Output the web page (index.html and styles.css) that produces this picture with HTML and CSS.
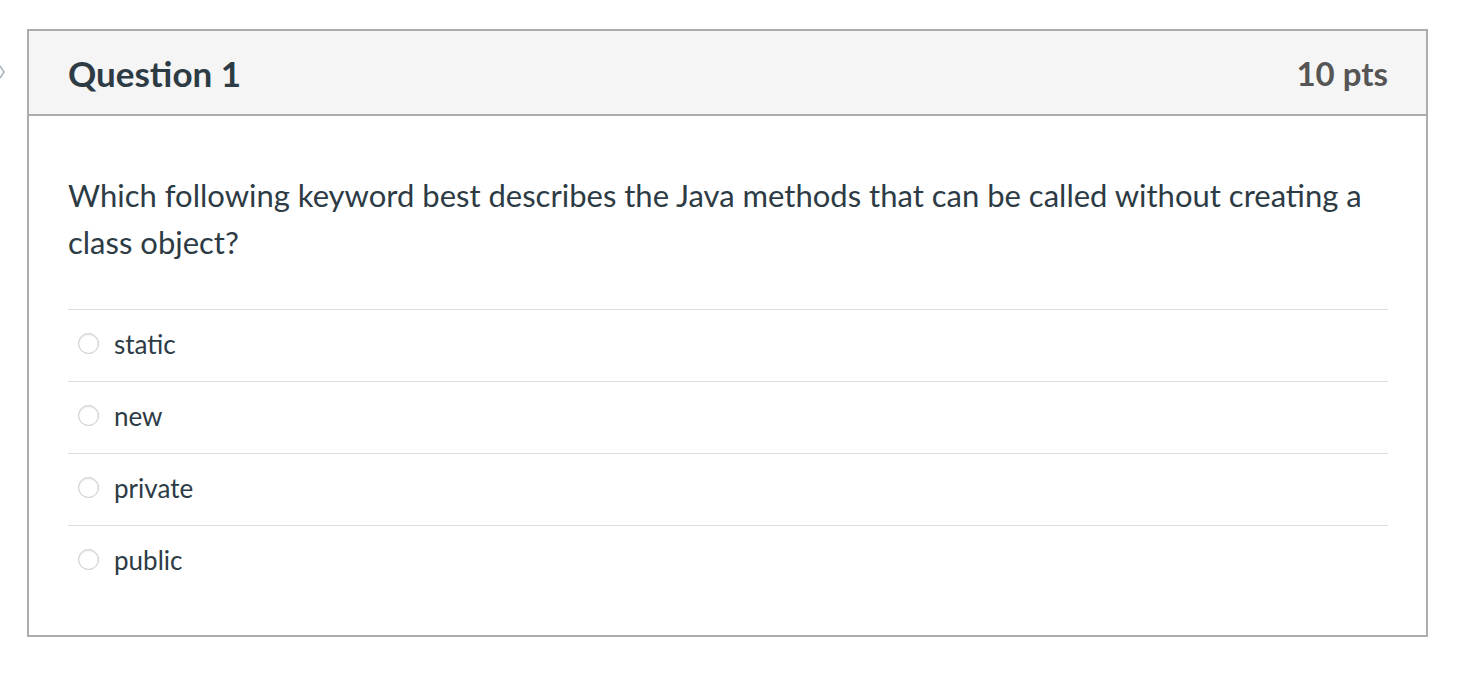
FILE: index.html
```html
<!DOCTYPE html>
<html>
<head>
<meta charset="utf-8">
<link rel="stylesheet" href="styles.css">
</head>
<body>
<div class="page">
  <div class="chev">
    <svg width="10" height="16" viewBox="0 0 10 16"><path d="M3 2 L7 8 L3 14" fill="none" stroke="#a3afbb" stroke-width="1.5"/></svg>
  </div>
  <div class="card">
    <div class="head">
      <h2 class="title">Question 1</h2>
      <div class="pts">10 pts</div>
    </div>
    <div class="body">
      <p class="qtext">Which following keyword best describes the Java methods that can be called without creating a class object?</p>
      <div class="answers">
        <label class="ans"><span class="radio"></span><span class="lbl">static</span></label>
        <label class="ans"><span class="radio"></span><span class="lbl">new</span></label>
        <label class="ans"><span class="radio"></span><span class="lbl">private</span></label>
        <label class="ans"><span class="radio"></span><span class="lbl">public</span></label>
      </div>
    </div>
  </div>
</div>
</body>
</html>
```
FILE: styles.css
```css
html, body { margin: 0; padding: 0; background: #fff; }
body { font-family: Lato, "Noto Sans", sans-serif; color: #2d3b45; }
.page { display: flex; align-items: flex-start; padding-top: 29px; }
.chev { width: 30px; padding-top: 35px; margin-left: -3px; }
.card { width: 1401px; box-sizing: border-box; border: 2px solid #adadad; }
.head { display: flex; justify-content: space-between; align-items: center; height: 83px; padding: 0 38px 0 39px; background: #f5f5f5; border-bottom: 2px solid #adadad; }
.title { margin: 0; font-size: 35px; font-weight: 700; color: #2d3b45; }
.pts { font-size: 33px; font-weight: 700; color: #555; }
.body { padding: 56px 38px 38px 39px; }
.qtext { margin: 0 0 43px; font-size: 31px; line-height: 47px; }
.answers { display: flex; flex-direction: column; }
.ans { display: flex; align-items: center; height: 67px; padding-bottom: 4px; border-top: 1px solid #dcdcdc; }
.radio { width: 19px; height: 19px; border-radius: 50%; border: 1px solid #c8c8c8; box-shadow: inset 0 1px 2px rgba(0,0,0,0.1); margin-left: 10px; margin-right: 15px; background: #fff; flex: none; }
.lbl { font-size: 26px; }
```
